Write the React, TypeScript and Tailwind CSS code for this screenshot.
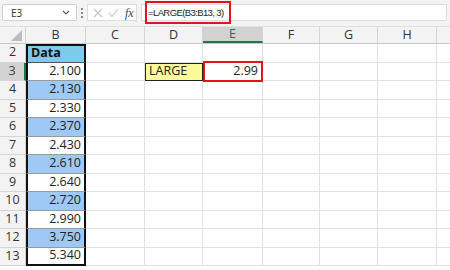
import React from "react";

const cols = [
  { key: "B", w: 60 },
  { key: "C", w: 59 },
  { key: "D", w: 58 },
  { key: "E", w: 60 },
  { key: "F", w: 57 },
  { key: "G", w: 58 },
  { key: "H", w: 59 },
  { key: "I", w: 20 },
];

const data = ["2.100", "2.130", "2.330", "2.370", "2.430", "2.610", "2.640", "2.720", "2.990", "3.750", "5.340"];

function Cell({ w, className = "", children }: { w: number; className?: string; children?: React.ReactNode }) {
  return (
    <div
      className={`shrink-0 h-full border-r border-b border-[#e1e1e1] flex items-center ${className}`}
      style={{ width: w }}
    >
      {children}
    </div>
  );
}

export default function App() {
  const rows = Array.from({ length: 12 }, (_, i) => i + 2);
  return (
    <div
      className="w-[450px] h-[270px] overflow-hidden bg-white text-[#222] relative"
      style={{ fontFamily: '"Open Sans", "Noto Sans", sans-serif' }}
    >
      {/* formula bar */}
      <div className="h-[27px] bg-[#f3f3f3] flex items-start pt-[4px] relative border-b border-[#e0e0e0]">
        <div className="ml-[2px] w-[75px] h-[17px] bg-white border border-[#cfcfcf] rounded-[2px] flex items-center justify-between pl-[8px] pr-[6px]">
          <span className="text-[10px] text-[#333] leading-none">E3</span>
          <svg width="8" height="5" viewBox="0 0 8 5">
            <path d="M1 1 L4 4 L7 1" fill="none" stroke="#555" strokeWidth="1.1" />
          </svg>
        </div>
        <div className="w-[10px] h-[17px] flex flex-col items-center justify-center gap-[2px]">
          <span className="w-[2px] h-[2px] bg-[#666] rounded-full" />
          <span className="w-[2px] h-[2px] bg-[#666] rounded-full" />
          <span className="w-[2px] h-[2px] bg-[#666] rounded-full" />
        </div>
        <div className="w-[50px] h-[17px] bg-white border border-[#dcdcdc] flex items-center pl-[5px] gap-[5px]">
          <svg width="10" height="10" viewBox="0 0 10 10">
            <path d="M1 1 L9 9 M9 1 L1 9" stroke="#c4c4c4" strokeWidth="1.1" />
          </svg>
          <svg width="11" height="10" viewBox="0 0 11 10">
            <path d="M1 5 L4 8.5 L10 1" fill="none" stroke="#c4c4c4" strokeWidth="1.1" />
          </svg>
          <span
            className="text-[12px] italic text-[#444] leading-none ml-[1px]"
            style={{ fontFamily: '"Liberation Serif", serif' }}
          >
            <i>f</i>x
          </span>
        </div>
        <div className="ml-[4px] flex-1 mr-[3px] h-[17px] bg-white border border-[#dcdcdc] relative">
          <div className="absolute left-[3px] top-[-4px] w-[86px] h-[23px] border-[2.5px] border-[#e2141b] flex items-center pl-[1px]">
            <span
              className="text-[9.5px] text-[#222] leading-none tracking-[-0.6px] whitespace-nowrap"
              style={{ fontFamily: '"Liberation Sans", sans-serif' }}
            >
              =LARGE(B3:B13, 3)
            </span>
          </div>
        </div>
      </div>

      {/* header row */}
      <div className="h-[17px] flex bg-[#f3f3f3] border-b border-[#c8c8c8]">
        <div className="w-[26px] shrink-0 h-full border-r border-[#d4d4d4] relative">
          <svg className="absolute right-[3px] bottom-[2px]" width="11" height="11" viewBox="0 0 11 11">
            <path d="M11 0 L11 11 L0 11 Z" fill="#bcbcbc" />
          </svg>
        </div>
        {cols.map((c) => (
          <div
            key={c.key}
            className={`shrink-0 h-full border-r border-[#d4d4d4] flex items-center justify-center text-[12.5px] ${
              c.key === "E" ? "bg-[#d2d2d2] text-[#2e6b4a] border-b-2 border-b-[#217346]" : "text-[#333]"
            }`}
            style={{ width: c.w }}
          >
            {c.key === "I" ? "" : c.key}
          </div>
        ))}
      </div>

      {/* rows */}
      {rows.map((r) => {
        const isBlue = r >= 3 && r % 2 === 0;
        return (
          <div key={r} className="h-[18.5px] flex">
            <div
              className={`w-[26px] shrink-0 h-full border-r border-b border-[#d4d4d4] flex items-center justify-center text-[12.5px] ${
                r === 3 ? "bg-[#d2d2d2] text-[#444] border-r-2 border-r-[#217346]" : "bg-[#f3f3f3] text-[#333]"
              }`}
            >
              {r}
            </div>
            {cols.map((c) => {
              if (c.key === "B") {
                if (r === 2) {
                  return (
                    <div
                      key={c.key}
                      className="shrink-0 h-full bg-[#7dcbec] border-2 border-b border-[#111] border-b-[#555] flex items-center pl-[3px] text-[12.5px] font-bold text-[#111]"
                      style={{ width: c.w }}
                    >
                      Data
                    </div>
                  );
                }
                return (
                  <div
                    key={c.key}
                    className={`shrink-0 h-full border-x-2 border-x-[#111] ${
                      r === 13 ? "border-b-2 border-b-[#111]" : "border-b border-b-[#9a9a9a]"
                    } ${isBlue ? "bg-[#9ec8f5]" : "bg-white"} flex items-center justify-end pr-[3px] text-[12.5px] text-[#222]`}
                    style={{ width: c.w }}
                  >
                    {data[r - 3]}
                  </div>
                );
              }
              if (r === 3 && c.key === "D") {
                return (
                  <div
                    key={c.key}
                    className="shrink-0 h-full bg-[#fbfb9c] border border-[#222] flex items-center pl-[3px] text-[12.5px] text-[#222]"
                    style={{ width: c.w }}
                  >
                    LARGE
                  </div>
                );
              }
              if (r === 3 && c.key === "E") {
                return (
                  <div
                    key={c.key}
                    className="shrink-0 h-[21px] -mt-[1.5px] bg-white border-[2.5px] border-[#e2141b] flex items-center justify-end pr-[3px] text-[12.5px] text-[#222] relative z-10"
                    style={{ width: c.w }}
                  >
                    2.99
                  </div>
                );
              }
              return <Cell key={c.key} w={c.w} />;
            })}
          </div>
        );
      })}
    </div>
  );
}
